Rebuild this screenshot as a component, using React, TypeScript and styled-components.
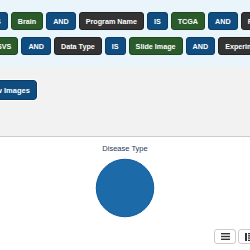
import { FC } from 'react';
import styled, { createGlobalStyle, css } from 'styled-components';

const GlobalStyle = createGlobalStyle`
  html, body {
    margin: 0;
    padding: 0;
    background: #ffffff;
    overflow: hidden;
  }

  body {
    font-family: 'Liberation Sans', Arial, sans-serif;
  }
`;

type PillKind = 'op' | 'field' | 'value';

const pillColors: Record<PillKind, { bg: string; border: string }> = {
  op: { bg: '#0f4c80', border: '#0a3c66' },
  field: { bg: '#333333', border: '#222222' },
  value: { bg: '#2b5b2b', border: '#1f461f' },
};

const Page = styled.div`
  width: 250px;
  height: 250px;
  overflow: hidden;
  display: flex;
  flex-direction: column;
`;

const FilterBand = styled.div`
  background-color: #eaf4fb;
  height: 67px;
  flex-shrink: 0;
  box-sizing: border-box;
  padding-top: 12px;
  display: flex;
  flex-direction: column;
  gap: 7px;
  overflow: hidden;
`;

const PillRow = styled.div<{ $offset: number }>`
  display: flex;
  gap: 3px;
  margin-left: ${props => props.$offset}px;
  white-space: nowrap;
`;

const Pill = styled.span<{ $kind: PillKind }>`
  flex-shrink: 0;
  display: flex;
  align-items: center;
  height: 18px;
  box-sizing: border-box;
  padding: 0 6px;
  border-radius: 3px;
  font-size: 7.2px;
  font-weight: bold;
  color: #ffffff;
  ${props => css`
    background-color: ${pillColors[props.$kind].bg};
    border: 1px solid ${pillColors[props.$kind].border};
  `}
`;

const ActionBar = styled.div`
  background-color: #f2f2f2;
  height: 70px;
  flex-shrink: 0;
  box-sizing: border-box;
  border-bottom: 1px solid #cccccc;
  padding-top: 13px;
  display: flex;
`;

const ViewButton = styled.button`
  margin-left: -22px;
  height: 20px;
  padding: 0 6px;
  background-color: #0f4c80;
  color: #ffffff;
  border: 1px solid #0a3c66;
  outline: 1px solid #ffffff;
  border-radius: 3px;
  font-family: inherit;
  font-size: 7.5px;
  font-weight: bold;
`;

const ChartSection = styled.div`
  flex: 1;
  display: flex;
  flex-direction: column;
  align-items: center;
  padding-top: 7px;
`;

const ChartTitle = styled.div`
  font-size: 7.5px;
  color: #1f3a5a;
  line-height: 9px;
`;

const Pie = styled.svg`
  margin-top: 5px;
`;

const Toolbar = styled.div`
  align-self: stretch;
  display: flex;
  justify-content: flex-end;
  gap: 2px;
  margin-top: 11px;
  margin-right: -10px;
`;

const ToolButton = styled.button`
  width: 22px;
  height: 15px;
  padding: 0;
  background: #ffffff;
  border: 1px solid #cccccc;
  border-radius: 3px;
  display: flex;
  align-items: center;
  justify-content: center;
`;

const filterRows: { offset: number; pills: [PillKind, string][] }[] = [
  {
    offset: -13,
    pills: [
      ['op', 'IS'],
      ['value', 'Brain'],
      ['op', 'AND'],
      ['field', 'Program Name'],
      ['op', 'IS'],
      ['value', 'TCGA'],
      ['op', 'AND'],
      ['field', 'Project Id'],
    ],
  },
  {
    offset: -10,
    pills: [
      ['value', 'SVS'],
      ['op', 'AND'],
      ['field', 'Data Type'],
      ['op', 'IS'],
      ['value', 'Slide Image'],
      ['op', 'AND'],
      ['field', 'Experimental Strategy'],
    ],
  },
];

const App: FC = () => {
  return (
    <Page>
      <GlobalStyle />
      <FilterBand>
        {filterRows.map((row, i) => (
          <PillRow key={i} $offset={row.offset}>
            {row.pills.map(([kind, label], j) => (
              <Pill key={j} $kind={kind}>
                {label}
              </Pill>
            ))}
          </PillRow>
        ))}
      </FilterBand>
      <ActionBar>
        <ViewButton>View Images</ViewButton>
      </ActionBar>
      <ChartSection>
        <ChartTitle>Disease Type</ChartTitle>
        <Pie width='60' height='60' viewBox='0 0 60 60'>
          <circle cx='30' cy='30' r='28.75' fill='#1c6aa8' stroke='#0f5aa0' strokeWidth='1' />
        </Pie>
        <Toolbar>
          <ToolButton title='list'>
            <svg width='9' height='7' viewBox='0 0 9 7'>
              <rect x='0' y='0' width='9' height='1.4' fill='#333' />
              <rect x='0' y='2.8' width='9' height='1.4' fill='#333' />
              <rect x='0' y='5.6' width='9' height='1.4' fill='#333' />
            </svg>
          </ToolButton>
          <ToolButton title='table'>
            <svg width='9' height='8' viewBox='0 0 9 8'>
              <rect x='0' y='0' width='2' height='8' fill='#333' />
              <rect x='3' y='0' width='6' height='1.3' fill='#333' />
              <rect x='3' y='2.2' width='6' height='1.3' fill='#333' />
              <rect x='3' y='4.4' width='6' height='1.3' fill='#333' />
              <rect x='3' y='6.7' width='6' height='1.3' fill='#333' />
            </svg>
          </ToolButton>
        </Toolbar>
      </ChartSection>
    </Page>
  );
};

export default App;
